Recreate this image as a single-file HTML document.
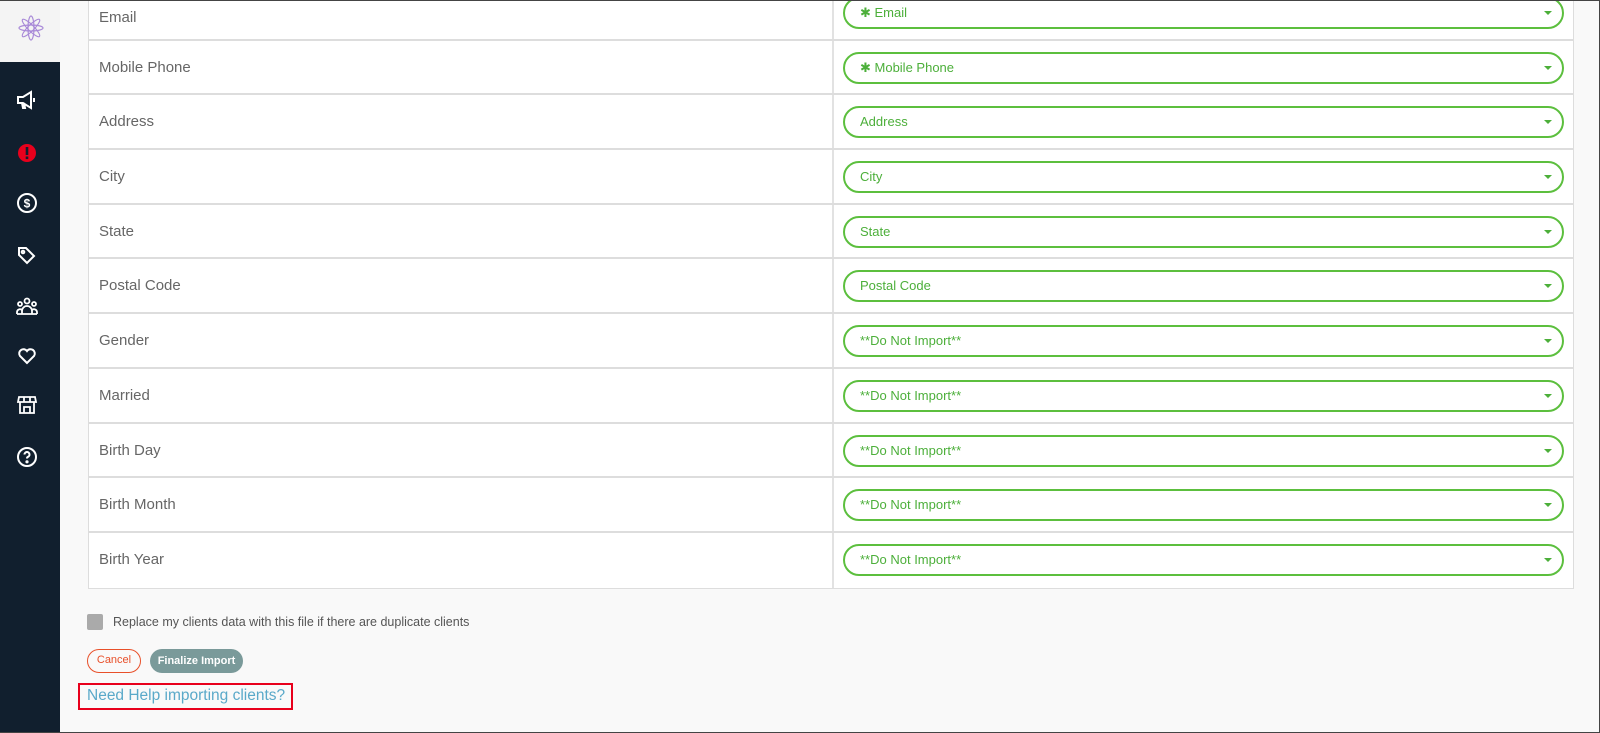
<!DOCTYPE html>
<html><head><style>
*{box-sizing:border-box;margin:0;padding:0}
body{width:1600px;height:733px;overflow:hidden;background:#f9f9f9;font-family:"Liberation Sans",sans-serif;position:relative}
.frame{position:absolute;left:0;top:0;width:1600px;height:733px;border:1px solid #444;border-left:none;pointer-events:none}
.side{position:absolute;left:0;top:0;width:60px;height:733px;background:#111f2e}
.logo{position:absolute;left:0;top:0;width:60px;height:62px;background:#f4f4f4}
.ic{position:absolute;left:15px;width:24px;height:24px}
.table{position:absolute;left:88px;top:-14px;width:1486px;border:1px solid #ddd;border-top:none;background:#fff}
.row{height:54.7px;border-bottom:2px solid #ddd;position:relative}
.row:last-child{border-bottom:none}
.lab{position:absolute;left:10px;top:0;line-height:54px;font-size:15px;color:#666}
.div{position:absolute;left:743px;top:0;bottom:0;width:2px;background:#e2e2e2}
.sel{position:absolute;left:754px;top:11px;width:721px;height:32px;border:2px solid #5cbf3e;border-radius:16px;color:#4caf3a;font-size:13px;line-height:28px;padding-left:15px}
.sel:after{content:"";position:absolute;right:10px;top:12px;border-left:4px solid transparent;border-right:4px solid transparent;border-top:4px solid #4caf3a}
</style></head><body>
<div class="side">
<div class="logo"><svg width="60" height="62" viewBox="0 0 60 62"><g fill="none" stroke="#a98ad8" stroke-width="1.2" transform="translate(31,28)"><ellipse rx="3" ry="12"/><ellipse rx="3" ry="12" transform="rotate(45)"/><ellipse rx="3" ry="12" transform="rotate(90)"/><ellipse rx="3" ry="12" transform="rotate(135)"/></g></svg></div>
<svg class="ic" style="top:88px" viewBox="0 0 24 24" fill="none" stroke="#fff" stroke-width="2"><path d="M3 9h5l8-5v16l-8-5H3z M7 15l1 5h2l-1-5 M19 10v4"/></svg>
<svg class="ic" style="top:141px" viewBox="0 0 24 24"><circle cx="12" cy="12" r="9" fill="#e8001c"/><rect x="10.7" y="6" width="2.6" height="8" fill="#111f2e"/><rect x="10.7" y="15.5" width="2.6" height="2.6" fill="#111f2e"/></svg>
<svg class="ic" style="top:191px" viewBox="0 0 24 24" fill="none" stroke="#fff" stroke-width="2"><circle cx="12" cy="12" r="9"/><text x="12" y="16.5" text-anchor="middle" font-size="12" font-weight="bold" fill="#fff" stroke="none" font-family="Liberation Sans">$</text></svg>
<svg class="ic" style="top:243px" viewBox="0 0 24 24" fill="none" stroke="#fff" stroke-width="2"><path d="M4 5v7l8 8 7-7-8-8z"/><circle cx="8" cy="9" r="1.3"/></svg>
<svg class="ic" style="top:295px" viewBox="0 0 24 24" fill="none" stroke="#fff" stroke-width="1.8"><circle cx="12" cy="6" r="2.5"/><circle cx="5" cy="9" r="2"/><circle cx="19" cy="9" r="2"/><path d="M7 19v-3a5 5 0 0 1 10 0v3z M2 19v-2a3 3 0 0 1 5-2 M22 19v-2a3 3 0 0 0-5-2 M2 19h20"/></svg>
<svg class="ic" style="top:343px" viewBox="0 0 24 24" fill="none" stroke="#fff" stroke-width="2"><path d="M12 20l-7-7a4.2 4.2 0 0 1 7-5 4.2 4.2 0 0 1 7 5z"/></svg>
<svg class="ic" style="top:393px" viewBox="0 0 24 24" fill="none" stroke="#fff" stroke-width="1.8"><path d="M4 4h16l1 5H3z M5 9v11h14V9 M9 20v-6h6v6 M9 4v5 M15 4v5"/></svg>
<svg class="ic" style="top:445px" viewBox="0 0 24 24" fill="none" stroke="#fff" stroke-width="2"><circle cx="12" cy="12" r="9"/><path d="M9.5 9.5a2.5 2.5 0 1 1 3.5 2.3c-.8.4-1 1-1 1.7"/><circle cx="12" cy="16.8" r=".6" fill="#fff"/></svg>
</div>
<div class="table">
<div class="row"><div class="lab" style="top:5px">Email</div><div class="div"></div><div class="sel">✱ Email</div></div>
<div class="row"><div class="lab">Mobile Phone</div><div class="div"></div><div class="sel">✱ Mobile Phone</div></div>
<div class="row"><div class="lab">Address</div><div class="div"></div><div class="sel">Address</div></div>
<div class="row"><div class="lab">City</div><div class="div"></div><div class="sel">City</div></div>
<div class="row"><div class="lab">State</div><div class="div"></div><div class="sel">State</div></div>
<div class="row"><div class="lab">Postal Code</div><div class="div"></div><div class="sel">Postal Code</div></div>
<div class="row"><div class="lab">Gender</div><div class="div"></div><div class="sel">**Do Not Import**</div></div>
<div class="row"><div class="lab">Married</div><div class="div"></div><div class="sel">**Do Not Import**</div></div>
<div class="row"><div class="lab">Birth Day</div><div class="div"></div><div class="sel">**Do Not Import**</div></div>
<div class="row"><div class="lab">Birth Month</div><div class="div"></div><div class="sel">**Do Not Import**</div></div>
<div class="row"><div class="lab">Birth Year</div><div class="div"></div><div class="sel">**Do Not Import**</div></div>
</div>
<div style="position:absolute;left:87px;top:614px;width:16px;height:16px;background:#aaa;border-radius:2px"></div>
<div style="position:absolute;left:113px;top:615px;font-size:12.5px;color:#555">Replace my clients data with this file if there are duplicate clients</div>
<div style="position:absolute;left:87px;top:649px;width:54px;height:24px;border:1.5px solid #e8502a;border-radius:12px;color:#e8502a;font-size:11px;line-height:21px;text-align:center">Cancel</div>
<div style="position:absolute;left:150px;top:649px;width:93px;height:24px;background:#7a9a9a;border-radius:12px;color:#fff;font-size:11px;font-weight:bold;line-height:24px;text-align:center">Finalize Import</div>
<div style="position:absolute;left:78px;top:683px;width:215px;height:27px;border:2px solid #e8001c"></div>
<div style="position:absolute;left:87px;top:687px;font-size:15.5px;color:#5aa9c9">Need Help importing clients?</div>
<div class="frame"></div>
</body></html>
